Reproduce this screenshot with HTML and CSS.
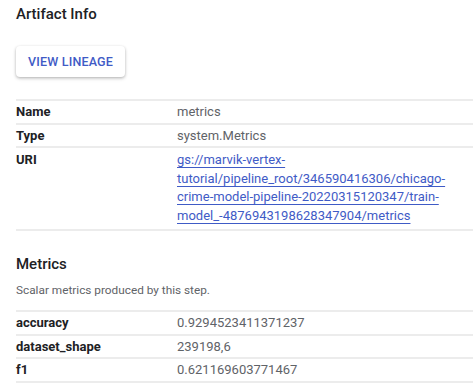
FILE: index.html
```html
<!DOCTYPE html>
<html lang="en">
<head>
    <meta charset="UTF-8">
    <title>Artifact Info</title>
    <link rel="stylesheet" href="styles.css">
</head>
<body>
<div class="panel">
    <h2 class="title">Artifact Info</h2>
    <button class="lineage-btn">VIEW LINEAGE</button>
    <table class="info-table">
        <tr>
            <td class="key">Name</td>
            <td class="val">metrics</td>
        </tr>
        <tr>
            <td class="key">Type</td>
            <td class="val">system.Metrics</td>
        </tr>
        <tr class="uri-row">
            <td class="key">URI</td>
            <td class="val"><a href="#">gs://marvik-vertex-<br>tutorial/pipeline_root/346590416306/chicago-<br>crime-model-pipeline-20220315120347/train-<br>model_-4876943198628347904/metrics</a></td>
        </tr>
    </table>

    <h2 class="title metrics-title">Metrics</h2>
    <p class="subtitle">Scalar metrics produced by this step.</p>
    <table class="info-table">
        <tr>
            <td class="key">accuracy</td>
            <td class="val">0.9294523411371237</td>
        </tr>
        <tr>
            <td class="key">dataset_shape</td>
            <td class="val">239198,6</td>
        </tr>
        <tr>
            <td class="key">f1</td>
            <td class="val">0.621169603771467</td>
        </tr>
    </table>
</div>
</body>
</html>
```

FILE: styles.css
```css
* { box-sizing: border-box; }
body {
    margin: 0;
    font-family: Roboto, Arial, sans-serif;
    background: #fff;
    color: #202124;
}
.panel {
    padding: 4px 1px 0 16px;
}
.title {
    margin: 0;
    font-size: 15px;
    font-weight: 500;
    line-height: 20px;
}
.lineage-btn {
    display: block;
    margin-top: 22px;
    width: 109px;
    height: 31px;
    padding: 0;
    border: none;
    border-radius: 4px;
    background: #fff;
    color: #3f5bc6;
    font-family: Roboto, Arial, sans-serif;
    font-size: 12.5px;
    font-weight: 500;
    letter-spacing: 0.2px;
    box-shadow: 0 1px 3px rgba(0,0,0,0.25), 0 2px 4px rgba(0,0,0,0.08);
    cursor: pointer;
}
.info-table {
    width: 100%;
    margin-top: 22px;
    border-collapse: collapse;
    font-size: 13px;
    border-top: 2px solid #ececec;
}
.info-table td {
    border-bottom: 2px solid #ececec;
    padding: 0;
    height: 23.5px;
    vertical-align: middle;
}
.info-table .key {
    width: 161px;
    font-weight: 700;
    color: #202124;
}
.info-table .val {
    color: #5f6368;
}
.info-table a {
    display: block;
    padding: 3px 0 4px;
    color: #3f5bc6;
    line-height: 18.5px;
    text-decoration: underline;
    text-underline-offset: 3px;
}
.uri-row .key {
    vertical-align: top;
    padding-top: 4px;
}
.metrics-title {
    margin-top: 23px;
}
.subtitle {
    margin: 9px 0 0;
    font-size: 11.8px;
    color: #5f6368;
}
.subtitle + .info-table {
    margin-top: 13px;
}
```
